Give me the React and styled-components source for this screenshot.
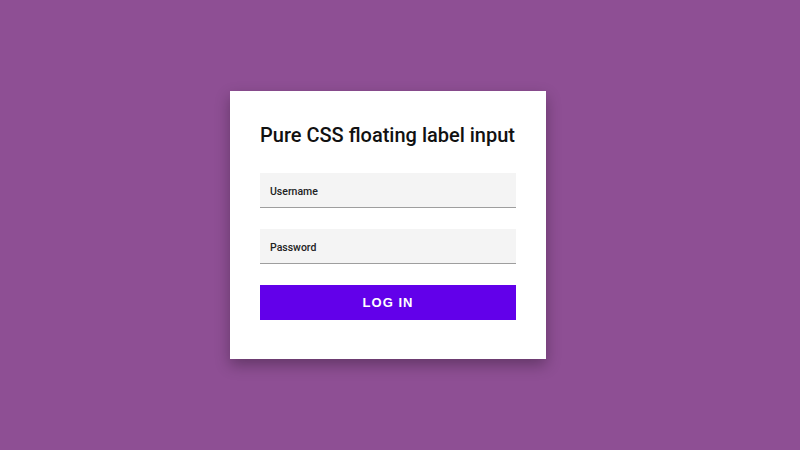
import styled, { createGlobalStyle } from 'styled-components';

const GlobalStyle = createGlobalStyle`
  * { box-sizing: border-box; }
  html, body { margin: 0; height: 100%; }
  body {
    background-color: #8e4f94;
    font-family: Roboto, "Liberation Sans", sans-serif;
  }
  #root { height: 100%; }
`

const Page = styled.div`
  height: 100%;
  display: flex;
  align-items: center;
  justify-content: center;
  padding-right: 24px;
`

const Card = styled.form`
  width: 316px;
  background-color: white;
  padding: 30px 30px 39px;
  box-shadow: 0 6px 14px rgba(0, 0, 0, 0.3);
`

const Title = styled.h1`
  margin: 0 0 24px;
  font-size: 20px;
  font-weight: 500;
  line-height: 28px;
  color: #111;
  white-space: nowrap;
`

const Field = styled.label`
  display: flex;
  align-items: center;
  height: 35px;
  margin-bottom: 21px;
  padding: 3px 10px 0;
  background-color: #f4f4f4;
  border-bottom: 1px solid #9e9e9e;
  font-size: 10.5px;
  font-weight: 500;
  color: #222;
  cursor: text;
`

const Input = styled.input`
  position: absolute;
  opacity: 0;
  width: 0;
`

const Button = styled.button`
  width: 100%;
  height: 35px;
  border: none;
  background-color: #6200ea;
  color: white;
  font-family: "Liberation Sans", Arial, sans-serif;
  font-size: 13px;
  font-weight: 700;
  letter-spacing: 1px;
  text-transform: uppercase;
  cursor: pointer;
`

export default function App() {
    return (
        <>
            <GlobalStyle/>
            <Page>
                <Card onSubmit={(e) => e.preventDefault()}>
                    <Title>Pure CSS floating label input</Title>
                    <Field>
                        <Input type="text"/>
                        Username
                    </Field>
                    <Field>
                        <Input type="password"/>
                        Password
                    </Field>
                    <Button type="submit">Log in</Button>
                </Card>
            </Page>
        </>
    )
}
